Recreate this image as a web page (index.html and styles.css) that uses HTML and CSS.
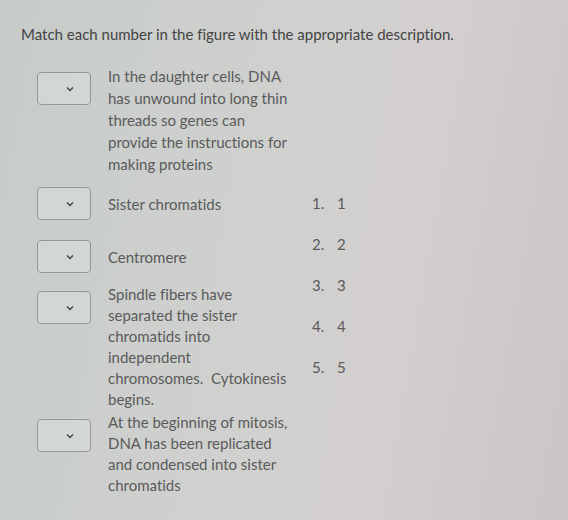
FILE: index.html
```html
<!DOCTYPE html>
<html lang="en">
<head>
  <meta charset="UTF-8">
  <meta name="viewport" content="width=device-width, initial-scale=1.0">
  <title>Matching Question</title>
  <link rel="stylesheet" href="styles.css">
</head>
<body>

  <div id="question">
    <p class="prompt">Match each number in the figure with the appropriate description.</p>

    <div class="match">
      <div class="answers">
        <div class="row">
          <div class="pick"><svg width="8" height="6" viewBox="0 0 8 6"><path d="M1 1.5 L4 4.5 L7 1.5" fill="none" stroke="#444" stroke-width="1.4"/></svg></div>
          <div class="desc">In the daughter cells, DNA has unwound into long thin threads so genes can provide the instructions for making proteins</div>
        </div>
        <div class="row short first">
          <div class="pick"><svg width="8" height="6" viewBox="0 0 8 6"><path d="M1 1.5 L4 4.5 L7 1.5" fill="none" stroke="#444" stroke-width="1.4"/></svg></div>
          <div class="desc">Sister chromatids</div>
        </div>
        <div class="row short">
          <div class="pick"><svg width="8" height="6" viewBox="0 0 8 6"><path d="M1 1.5 L4 4.5 L7 1.5" fill="none" stroke="#444" stroke-width="1.4"/></svg></div>
          <div class="desc">Centromere</div>
        </div>
        <div class="row tight">
          <div class="pick"><svg width="8" height="6" viewBox="0 0 8 6"><path d="M1 1.5 L4 4.5 L7 1.5" fill="none" stroke="#444" stroke-width="1.4"/></svg></div>
          <div class="desc">Spindle fibers have separated the sister chromatids into independent chromosomes.&nbsp; Cytokinesis begins.</div>
        </div>
        <div class="row tight last">
          <div class="pick"><svg width="8" height="6" viewBox="0 0 8 6"><path d="M1 1.5 L4 4.5 L7 1.5" fill="none" stroke="#444" stroke-width="1.4"/></svg></div>
          <div class="desc">At the beginning of mitosis, DNA has been replicated and condensed into sister chromatids</div>
        </div>
      </div>

      <ol class="choices">
        <li>1</li>
        <li>2</li>
        <li>3</li>
        <li>4</li>
        <li>5</li>
      </ol>
    </div>
  </div>

</body>
</html>
```

FILE: styles.css
```css
html {
  height: 100%;
}

body {
  margin: 0;
  min-height: 100%;
  font-family: 'Lato', 'Open Sans', sans-serif;
  font-size: 15px;
  font-variant-ligatures: none;
  color: #5a5a5a;
  background: linear-gradient(100deg, #c6ccc9 0%, #d0d1cf 45%, #d3cfce 70%, #cbc5c5 100%);
}

#question {
  padding: 24px 0 0 21px;
}

.prompt {
  margin: 0 0 21px 0;
  font-size: 15px;
  line-height: 20px;
  color: #444;
}

.match {
  display: flex;
}

.answers {
  width: 291px;
  padding-left: 16px;
  box-sizing: border-box;
}

.row {
  display: flex;
  align-items: flex-start;
  gap: 17px;
}

.row .pick {
  margin-top: 7px;
}

.row.short {
  align-items: center;
}

.row.short .pick {
  margin-top: 0;
}

.row.first {
  margin-top: 12px;
}

.row.short + .row.short {
  margin-top: 20px;
}

.row.tight {
  margin-top: 11px;
}

.row.last {
  margin-top: 2px;
}

.row.tight .desc {
  line-height: 21px;
}

.pick {
  flex: none;
  width: 54px;
  height: 33px;
  border: 1px solid #949796;
  border-radius: 4px;
  background: rgba(230, 232, 230, 0.35);
  display: flex;
  align-items: center;
  justify-content: flex-end;
  padding-right: 16px;
  box-sizing: border-box;
}

.desc {
  width: 182px;
  line-height: 22px;
}

.choices {
  margin: 128px 0 0 0;
  padding-left: 0;
  list-style: none;
  counter-reset: num;
}

.choices li {
  counter-increment: num;
  height: 41px;
  line-height: 20px;
  padding-left: 25px;
  position: relative;
}

.choices li::before {
  content: counter(num) ".";
  position: absolute;
  left: 0;
}
```
